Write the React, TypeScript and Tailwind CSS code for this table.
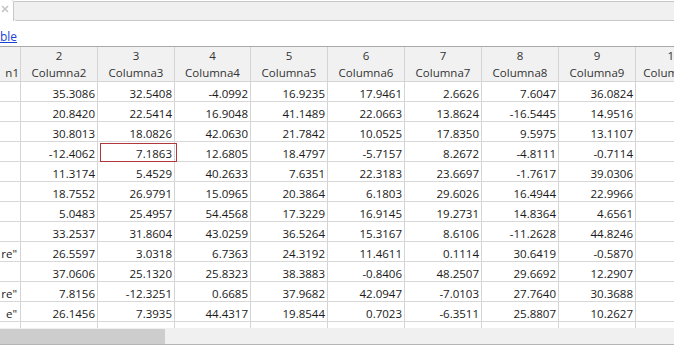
const widths = [21, 77, 77, 76, 77, 77, 77, 77, 77, 77];

const rowNames = ['', '', '', '', '', '', '', '', 're"', '', 're"', 'e"', ''];

const data: string[][] = [
  ['35.3086', '32.5408', '-4.0992', '16.9235', '17.9461', '2.6626', '7.6047', '36.0824'],
  ['20.8420', '22.5414', '16.9048', '41.1489', '22.0663', '13.8624', '-16.5445', '14.9516'],
  ['30.8013', '18.0826', '42.0630', '21.7842', '10.0525', '17.8350', '9.5975', '13.1107'],
  ['-12.4062', '7.1863', '12.6805', '18.4797', '-5.7157', '8.2672', '-4.8111', '-0.7114'],
  ['11.3174', '5.4529', '40.2633', '7.6351', '22.3183', '23.6697', '-1.7617', '39.0306'],
  ['18.7552', '26.9791', '15.0965', '20.3864', '6.1803', '29.6026', '16.4944', '22.9966'],
  ['5.0483', '25.4957', '54.4568', '17.3229', '16.9145', '19.2731', '14.8364', '4.6561'],
  ['33.2537', '31.8604', '43.0259', '36.5264', '15.3167', '8.6106', '-11.2628', '44.8246'],
  ['26.5597', '3.0318', '6.7363', '24.3192', '11.4611', '0.1114', '30.6419', '-0.5870'],
  ['37.0606', '25.1320', '25.8323', '38.3883', '-0.8406', '48.2507', '29.6692', '12.2907'],
  ['7.8156', '-12.3251', '0.6685', '37.9682', '42.0947', '-7.0103', '27.7640', '30.3688'],
  ['26.1456', '7.3935', '44.4317', '19.8544', '0.7023', '-6.3511', '25.8807', '10.2627'],
  ['', '', '', '', '', '', '', ''],
];

export default function App() {
  return (
    <div
      className="w-[674px] h-[354px] overflow-hidden bg-white text-[#1a1a1a] relative"
      style={{ fontFamily: '"Open Sans", "Noto Sans", sans-serif' }}
    >
      {/* tab strip */}
      <div className="h-[21px] flex bg-white">
        <div className="w-[14px] h-[21px] flex items-start pt-[5px] pl-[1px] border-r border-[#c8c8c8] rounded-tr-[3px]">
          <svg width="8" height="8" viewBox="0 0 8 8">
            <path d="M1 1 L7 7 M7 1 L1 7" stroke="#c4c4c4" strokeWidth="1.6" />
          </svg>
        </div>
        <div className="flex-1 mt-[1px] h-[20px] bg-[#f0f0f0] border-t border-b border-[#c8c8c8] rounded-bl-[3px]" />
      </div>

      {/* variable link */}
      <div className="h-[25px] pt-[9px] text-[12px] leading-[14px]">
        <span className="text-[#1b3fd6] underline">ble</span>
      </div>

      {/* header */}
      <div className="flex h-[36px] bg-[#f1f1f1] border-t border-b border-[#a9a9a9] border-b-[#d4d4d4] text-[11.5px] text-[#333]">
        {widths.map((w, i) => (
          <div
            key={i}
            className="shrink-0 h-full border-r border-[#d4d4d4] flex flex-col items-center justify-center leading-[17px] overflow-hidden"
            style={{ width: w }}
          >
            {i === 0 ? (
              <>
                <span className="h-[17px]" />
                <span className="self-end pr-[1px]">n1</span>
              </>
            ) : (
              <>
                <span>{i + 1}</span>
                <span className="whitespace-nowrap">Columna{i + 1}</span>
              </>
            )}
          </div>
        ))}
      </div>

      {/* body */}
      <div className="h-[246px] overflow-hidden relative">
        {data.map((row, r) => (
          <div key={r} className="flex h-[20px] border-b border-[#d8d8d8] text-[11.5px] leading-[20px]">
            <div
              className="shrink-0 h-full border-r border-[#d4d4d4] text-right pr-[3px] pt-[2px] whitespace-nowrap overflow-hidden"
              style={{ width: widths[0] }}
            >
              {rowNames[r]}
            </div>
            {row.map((v, c) => (
              <div
                key={c}
                className="shrink-0 h-full border-r border-[#d4d4d4] text-right pr-[2px] pt-[2px]"
                style={{ width: widths[c + 1] }}
              >
                {v}
              </div>
            ))}
            <div className="shrink-0 h-full border-r border-[#d4d4d4]" style={{ width: widths[9] }} />
          </div>
        ))}
        {/* selected cell */}
        <div className="absolute left-[100px] top-[61px] w-[77px] h-[19px] border border-[#b0383c]" />
      </div>

      {/* horizontal scrollbar */}
      <div className="h-[17px] bg-[#f0f0f0] border-b border-[#b5b5b5] flex items-center">
        <div className="w-[165px] h-[15px] bg-[#cdcdcd]" />
      </div>
    </div>
  );
}
